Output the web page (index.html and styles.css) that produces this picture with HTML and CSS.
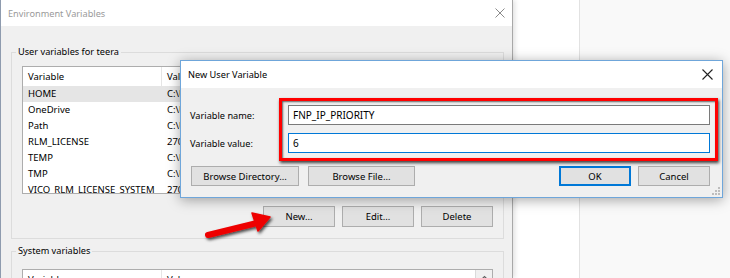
FILE: index.html
```html
<!DOCTYPE html>
<html>
<head>
<meta charset="utf-8">
<link rel="stylesheet" href="styles.css">
</head>
<body>
<div class="desk">
  <div class="envwin">
    <div class="titlebar">
      <span class="title">Environment Variables</span>
      <svg class="xicon" width="10" height="10" viewBox="0 0 10 10"><path d="M0.5 0.5L9.5 9.5M9.5 0.5L0.5 9.5" stroke="#8a8a8a" stroke-width="1"/></svg>
    </div>
    <div class="envbody">
      <fieldset class="group user">
        <legend>User variables for teera</legend>
        <div class="list">
          <div class="row head"><span class="c1">Variable</span><span class="c2">Value</span></div>
          <div class="row sel"><span class="c1">HOME</span><span class="c2">C:\Users\teera</span></div>
          <div class="row"><span class="c1">OneDrive</span><span class="c2">C:\Users\teera\OneDrive</span></div>
          <div class="row"><span class="c1">Path</span><span class="c2">C:\Users\teera\AppData\Local</span></div>
          <div class="row"><span class="c1">RLM_LICENSE</span><span class="c2">27000@localhost</span></div>
          <div class="row"><span class="c1">TEMP</span><span class="c2">C:\Users\teera\AppData\Local\Temp</span></div>
          <div class="row"><span class="c1">TMP</span><span class="c2">C:\Users\teera\AppData\Local\Temp</span></div>
          <div class="row"><span class="c1">VICO_RLM_LICENSE_SYSTEM</span><span class="c2">27000@localhost</span></div>
        </div>
        <div class="btns">
          <button class="btn">New...</button>
          <button class="btn">Edit...</button>
          <button class="btn">Delete</button>
        </div>
      </fieldset>
      <fieldset class="group sys">
        <legend>System variables</legend>
        <div class="list syslist">
          <div class="row head"><span class="c1">Variable</span><span class="c2">Value</span></div>
          <div class="scroll">
            <svg width="9" height="6" viewBox="0 0 9 6"><path d="M1 5L4.5 1.5L8 5" fill="none" stroke="#606060" stroke-width="1.2"/></svg>
          </div>
        </div>
      </fieldset>
    </div>
  </div>
  <div class="strip"></div>
  <div class="rest"></div>

  <div class="dialog">
    <div class="dtitle">
      <span>New User Variable</span>
      <svg class="dx" width="11" height="11" viewBox="0 0 11 11"><path d="M0.5 0.5L10.5 10.5M10.5 0.5L0.5 10.5" stroke="#222" stroke-width="1.1"/></svg>
    </div>
    <div class="dbody">
      <div class="form">
        <label class="lbl">Variable name:</label>
        <div class="input">FNP_IP_PRIORITY</div>
        <label class="lbl">Variable value:</label>
        <div class="input focus">6</div>
      </div>
      <div class="dbtns">
        <button class="btn bdir">Browse Directory...</button>
        <button class="btn bfile">Browse File...</button>
        <span class="spacer"></span>
        <button class="btn ok">OK</button>
        <button class="btn cancel">Cancel</button>
      </div>
    </div>
    <div class="highlight"></div>
    <svg class="grip" width="8" height="8" viewBox="0 0 8 8">
      <rect x="6" y="0" width="2" height="2" fill="#bdbdbd"/>
      <rect x="3" y="3" width="2" height="2" fill="#bdbdbd"/>
      <rect x="6" y="3" width="2" height="2" fill="#bdbdbd"/>
      <rect x="0" y="6" width="2" height="2" fill="#bdbdbd"/>
      <rect x="3" y="6" width="2" height="2" fill="#bdbdbd"/>
      <rect x="6" y="6" width="2" height="2" fill="#bdbdbd"/>
    </svg>
  </div>

  <svg class="arrow" width="80" height="40" viewBox="0 0 80 40">
    <defs>
      <filter id="sh" x="-20%" y="-40%" width="150%" height="200%">
        <feDropShadow dx="1.5" dy="2" stdDeviation="1.5" flood-color="#000" flood-opacity="0.7"/>
      </filter>
    </defs>
    <g filter="url(#sh)">
      <path d="M8 27L57 15" stroke="#ee0000" stroke-width="6" stroke-linecap="round"/>
      <path d="M52 5L70 9L58 23Z" fill="#ee0000" stroke="#ee0000" stroke-width="1.5" stroke-linejoin="round"/>
    </g>
  </svg>
</div>
</body>
</html>
```

FILE: styles.css
```css
* { box-sizing: border-box; }
html, body { margin: 0; padding: 0; }
body {
  width: 730px;
  height: 278px;
  overflow: hidden;
  font-family: "Noto Sans", "Open Sans", sans-serif;
  font-size: 9.5px;
  color: #000;
}
.desk {
  position: relative;
  display: flex;
  width: 730px;
  height: 278px;
  overflow: hidden;
  background: #f9f9f9;
}
.envwin {
  width: 513px;
  height: 278px;
  flex: none;
  background: #f0f0f0;
  border-left: 1px solid #8e9bae;
  border-right: 1px solid #a8a8a8;
  box-shadow: 2px 0 5px rgba(0,0,0,0.12);
  position: relative;
  z-index: 1;
}
.titlebar {
  height: 26px;
  background: #fff;
  display: flex;
  align-items: center;
  justify-content: space-between;
  padding: 0 7px 0 7px;
}
.title { color: #9a9a9a; font-size: 9.2px; }
.envbody {
  padding: 18px 8px 0 10px;
}
.group {
  margin: 0;
  border: 1px solid #dcdcdc;
  padding: 6px 10px 11px 10px;
  min-width: 0;
}
.group legend {
  padding: 0 2px;
  margin-left: -6px;
  line-height: 16px;
  font-size: 9.2px;
}
.sys { margin-top: 4px; padding-top: 10px; }
.list {
  background: #fff;
  border: 1px solid #adadad;
  height: 128px;
  overflow: hidden;
  position: relative;
}
.syslist { height: 60px; }
.row {
  display: flex;
  height: 16px;
  line-height: 16px;
  white-space: nowrap;
}
.row.head { height: 19px; line-height: 19px; }
.row.sel { background: #e5e5e5; }
.c1 {
  width: 139px;
  flex: none;
  padding-left: 5px;
}
.head .c1 { border-right: 1px solid #e5e5e5; }
.c2 { padding-left: 5px; }
.scroll {
  position: absolute;
  right: 0;
  top: 0;
  bottom: 0;
  width: 17px;
  background: #f0f0f0;
  border-left: 1px solid #dadada;
  display: flex;
  justify-content: center;
  padding-top: 5px;
}
.btns {
  display: flex;
  justify-content: flex-end;
  gap: 7px;
  margin-top: 12px;
}
.btn {
  font-family: inherit;
  font-size: 9.5px;
  color: #000;
  background: #e1e1e1;
  border: 1px solid #adadad;
  height: 21px;
  width: 72px;
  padding: 0;
  margin: 0;
}
.strip {
  width: 67px;
  flex: none;
  background: #fff;
  border-right: 1px solid #e2e2e2;
}
.rest { flex: 1; background: #f9f9f9; }

.dialog {
  position: absolute;
  left: 180px;
  top: 60px;
  width: 543px;
  background: #f0f0f0;
  border: 1px solid #6fa6da;
  box-shadow: 0 2px 12px rgba(0,0,0,0.35);
  z-index: 5;
}
.dtitle {
  height: 27px;
  background: #fff;
  display: flex;
  align-items: center;
  justify-content: space-between;
  padding: 0 9px 0 7px;
  font-size: 9.2px;
}
.dbody {
  padding: 17px 12px 11px 10px;
}
.form {
  display: grid;
  grid-template-columns: 97px 1fr;
  row-gap: 8px;
  align-items: center;
}
.lbl { font-size: 9.2px; margin-left: -1px; }
.input {
  height: 20px;
  line-height: 18px;
  background: #fff;
  border: 1px solid #7a7a7a;
  padding-left: 4px;
  font-size: 10px;
}
.input.focus { border-color: #0078d7; }
.dbtns {
  display: flex;
  margin-top: 13px;
  gap: 7px;
}
.dbtns .btn { height: 20px; }
.bdir { width: 108px; }
.bfile { width: 107px; margin-left: 2px; }
.spacer { flex: 1; }
.ok { border-color: #0078d7; box-shadow: inset 0 0 0 1px #0078d7; }
.highlight {
  position: absolute;
  left: 98px;
  top: 37px;
  width: 439px;
  height: 63px;
  border: 3px solid #ff0000;
  box-shadow: 1px 2px 3px rgba(0,0,0,0.75), inset 1px 1px 2px rgba(0,0,0,0.6);
  pointer-events: none;
}
.grip {
  position: absolute;
  right: 2px;
  bottom: 2px;
}
.arrow {
  position: absolute;
  left: 200px;
  top: 208px;
  z-index: 6;
}
```
